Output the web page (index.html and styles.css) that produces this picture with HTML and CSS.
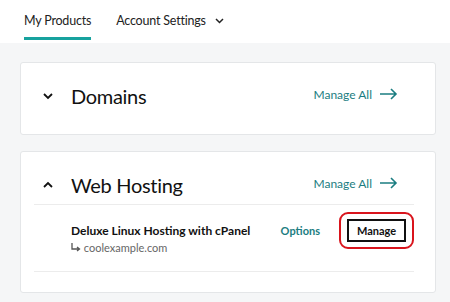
FILE: index.html
```html
<!DOCTYPE html>
<html lang="en">
<head>
    <meta charset="UTF-8">
    <meta name="viewport" content="width=device-width, initial-scale=1.0">
    <title>My Products</title>
    <link rel="stylesheet" href="styles.css">
</head>
<body>
    <div class="nav">
        <a href="#" class="tab active">My Products</a>
        <a href="#" class="tab">Account Settings
            <svg class="tab-caret" width="9" height="6" viewBox="0 0 9 6"><path d="M1 1l3.5 3.5L8 1" fill="none" stroke="#222" stroke-width="1.5"/></svg>
        </a>
    </div>
    <div class="page">
        <div class="card">
            <div class="card-header closed">
                <svg class="chevron" width="12" height="8" viewBox="0 0 12 8"><path d="M2 2l4 4 4-4" fill="none" stroke="#111" stroke-width="1.8"/></svg>
                <div class="card-title">Domains</div>
                <a href="#" class="manage-all">Manage All
                    <svg width="18" height="12" viewBox="0 0 18 12"><path d="M0 6h16M11 1l5 5-5 5" fill="none" stroke="#1b7d81" stroke-width="1.6"/></svg>
                </a>
            </div>
        </div>
        <div class="card">
            <div class="card-header">
                <svg class="chevron" width="12" height="8" viewBox="0 0 12 8"><path d="M2 6l4-4 4 4" fill="none" stroke="#111" stroke-width="1.8"/></svg>
                <div class="card-title">Web Hosting</div>
                <a href="#" class="manage-all">Manage All
                    <svg width="18" height="12" viewBox="0 0 18 12"><path d="M0 6h16M11 1l5 5-5 5" fill="none" stroke="#1b7d81" stroke-width="1.6"/></svg>
                </a>
            </div>
            <div class="product">
                <div class="product-info">
                    <div class="product-name">Deluxe Linux Hosting with cPanel</div>
                    <div class="product-domain">
                        <svg width="10" height="9" viewBox="0 0 10 9"><path d="M1 0v6h7M6 4l2.5 2L6 8" fill="none" stroke="#555" stroke-width="1.3"/></svg>
                        coolexample.com
                    </div>
                </div>
                <a href="#" class="options">Options</a>
                <span class="highlight"><button class="btn-manage">Manage</button></span>
            </div>
        </div>
    </div>
</body>
</html>
```

FILE: styles.css
```css
body {
    margin: 0;
    font-family: Lato, "Open Sans", sans-serif;
    background-color: #f5f6f7;
    color: #111;
}
a {
    text-decoration: none;
}
.nav {
    display: flex;
    height: 43px;
    background-color: white;
    padding-left: 24px;
    box-sizing: border-box;
}
.tab {
    display: flex;
    align-items: center;
    height: 40px;
    margin-right: 25px;
    padding-top: 4px;
    box-sizing: border-box;
    font-size: 12.5px;
    letter-spacing: -0.2px;
    color: #222;
    border-bottom: 3px solid transparent;
}
.tab.active {
    border-color: #17a29e;
}
.tab-caret {
    margin-left: 9px;
}
.page {
    padding: 19px 14px 10px 20px;
}
.card {
    background-color: white;
    border: 1px solid #e4e6e8;
    border-radius: 3px;
    margin-bottom: 16px;
    padding-bottom: 20px;
}
.card:last-child {
    margin-bottom: 0;
}
.card-header {
    display: flex;
    align-items: center;
    height: 36px;
    padding: 15px 37px 0 21px;
}
.chevron {
    margin-right: 17px;
}
.card-title {
    flex: 1;
    font-size: 20px;
    letter-spacing: -0.3px;
}
.manage-all {
    display: flex;
    align-items: center;
    gap: 8px;
    margin-top: -4px;
    font-size: 12px;
    color: #1b7d81;
}
.product {
    display: flex;
    align-items: flex-start;
    margin: 1px 21px 0 13px;
    padding: 18px 0 16px 37px;
    border-top: 1px solid #ececec;
    border-bottom: 1px solid #ececec;
}
.product-info {
    flex: 1;
}
.product-name {
    line-height: 16px;
    font-size: 12px;
    font-weight: bold;
}
.product-domain {
    margin-top: 1px;
    line-height: 15px;
    font-size: 11px;
    color: #666;
}
.options {
    margin-right: 19px;
    line-height: 16px;
    font-size: 11px;
    font-weight: bold;
    color: #1b7d81;
}
.highlight {
    display: inline-block;
    margin-top: -11px;
    padding: 5px 6px;
    border: 2px solid #d9141c;
    border-radius: 9px;
}
.btn-manage {
    display: block;
    width: 59px;
    height: 23px;
    padding: 0;
    background-color: white;
    border: 2px solid #111;
    font-family: inherit;
    font-size: 11px;
    font-weight: bold;
    color: #111;
}
```
